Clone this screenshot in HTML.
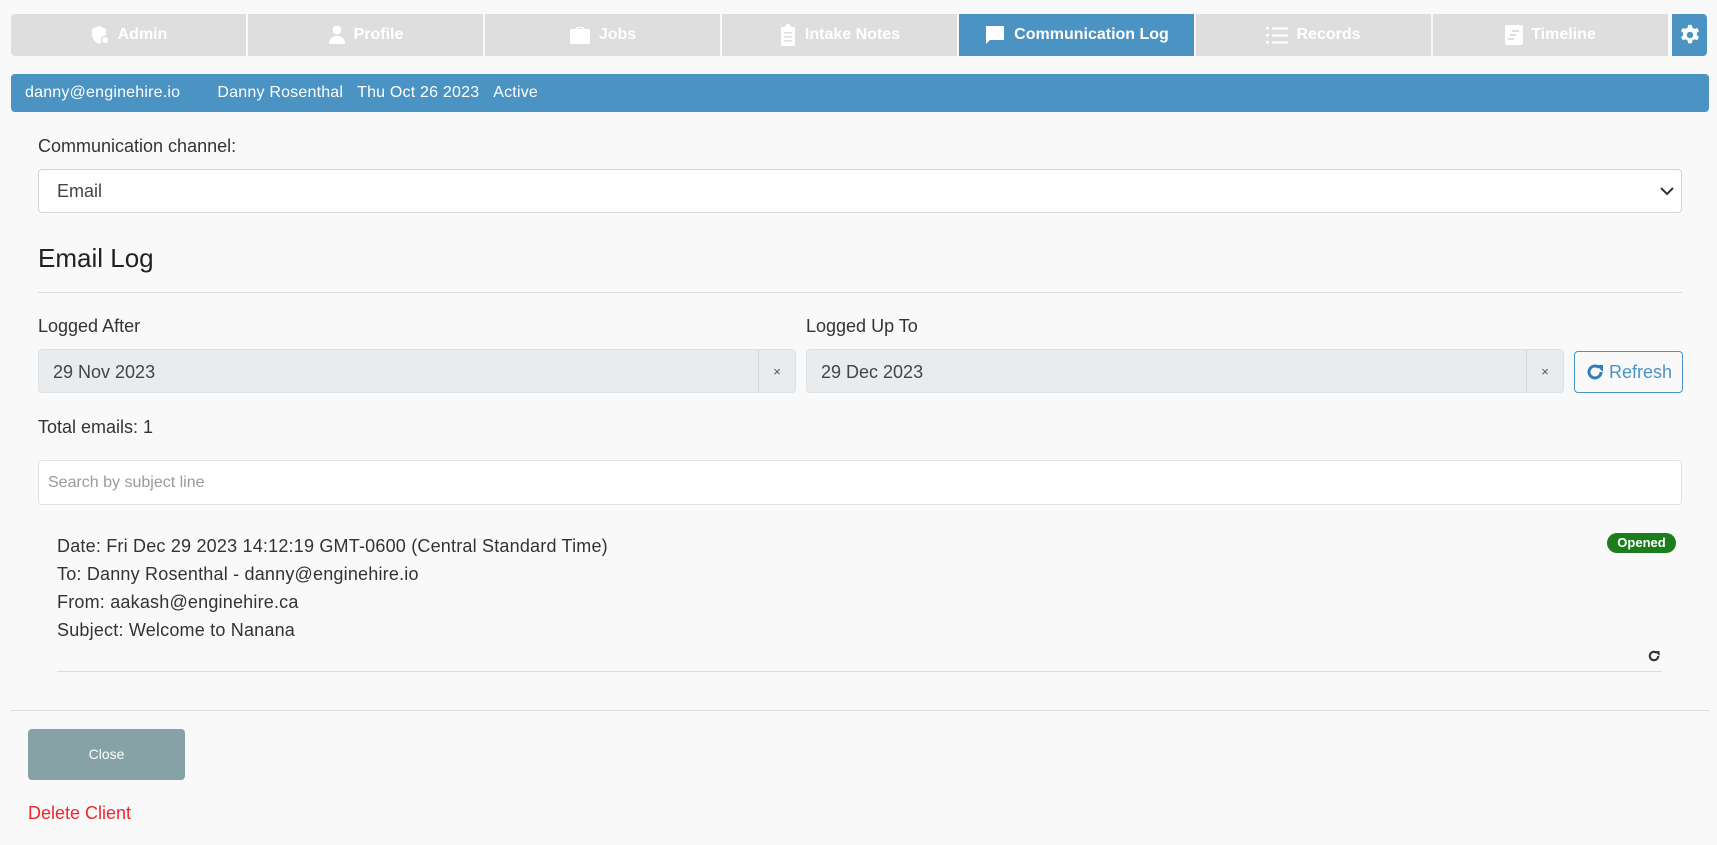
<!DOCTYPE html>
<html><head><meta charset="utf-8"><style>
*{box-sizing:border-box;margin:0;padding:0}
body{width:1717px;height:845px;background:#f9f9f9;font-family:"Liberation Sans",sans-serif;color:#333;position:relative;overflow:hidden}
.a{position:absolute}
.tab{position:absolute;top:14px;height:42px;width:235px;background:#dedede;color:#fff;font-size:16px;font-weight:bold;display:flex;align-items:center;justify-content:center;gap:8px}
.tab svg{fill:#fff}
.act{background:#4a93c3}
.inp{position:absolute;background:#e9ecef;border:1px solid #dee2e6;border-radius:4px;height:44px;font-size:18px;color:#444;padding:12px 14px}
.x{position:absolute;top:0;right:0;width:37px;height:42px;border-left:1px solid #d3d7db;font-size:13px;color:#555;display:flex;align-items:center;justify-content:center}
.line{position:absolute;left:57px;font-size:18px;color:#333;letter-spacing:0.2px}
</style></head><body>
<div class="tab" style="left:11px;border-radius:4px 0 0 4px"><svg width="20" height="20" viewBox="0 0 20 20"><path d="M9 1l7 3v5c0 5-3 8-7 10C5 17 2 14 2 9V4z"/><circle cx="15" cy="15" r="4.5" fill="#dedede"/><circle cx="15" cy="15" r="3"/></svg>Admin</div>
<div class="tab" style="left:248px"><svg width="18" height="20" viewBox="0 0 18 20"><circle cx="9" cy="5" r="4.5"/><path d="M1 19c0-5 3-8 8-8s8 3 8 8z"/></svg>Profile</div>
<div class="tab" style="left:485px"><svg width="22" height="20" viewBox="0 0 22 20"><path d="M7 4V2h8v2h-2V3H9v1z"/><rect x="1" y="4" width="20" height="15" rx="2"/></svg>Jobs</div>
<div class="tab" style="left:722px"><svg width="18" height="22" viewBox="0 0 18 22"><path d="M2 3h4a3 3 0 0 1 6 0h4v19H2z"/><rect x="5" y="8" width="8" height="1.6" fill="#dedede"/><rect x="5" y="12" width="8" height="1.6" fill="#dedede"/><rect x="5" y="16" width="8" height="1.6" fill="#dedede"/></svg>Intake Notes</div>
<div class="tab act" style="left:959px"><svg width="22" height="22" viewBox="0 0 22 22"><path d="M2 2h18v14H6l-4 4z"/></svg>Communication Log</div>
<div class="tab" style="left:1196px"><svg width="22" height="18" viewBox="0 0 22 18"><rect x="0" y="1" width="3" height="2.5"/><rect x="0" y="8" width="3" height="2.5"/><rect x="0" y="15" width="3" height="2.5"/><rect x="6" y="1.5" width="16" height="2"/><rect x="6" y="8.5" width="16" height="2"/><rect x="6" y="15.5" width="16" height="2"/></svg>Records</div>
<div class="tab" style="left:1433px"><svg width="18" height="20" viewBox="0 0 18 20"><rect x="0" y="0" width="18" height="20" rx="2"/><rect x="7" y="5" width="7" height="2" fill="#dedede"/><rect x="5" y="9" width="6" height="2" fill="#dedede"/><rect x="3" y="13" width="6" height="2" fill="#dedede"/></svg>Timeline</div>
<div class="tab act" style="left:1672px;width:35px;border-radius:0 4px 4px 0"><svg width="22" height="22" viewBox="0 0 24 24"><path d="M10 1h4l.6 3 2.3 1.3 2.9-1 2 3.4-2.3 2v2.6l2.3 2-2 3.4-2.9-1-2.3 1.3-.6 3h-4l-.6-3-2.3-1.3-2.9 1-2-3.4 2.3-2v-2.6l-2.3-2 2-3.4 2.9 1L9.4 4zM12 8.5a3.5 3.5 0 1 0 0 7 3.5 3.5 0 0 0 0-7z" fill-rule="evenodd"/></svg></div>

<div class="a" style="left:11px;top:74px;width:1698px;height:38px;background:#4a93c3;border-radius:4px;color:#fff;font-size:16px;line-height:38px;padding-left:14px;letter-spacing:0.2px">danny@enginehire.io&nbsp;&nbsp;&nbsp;&nbsp;&nbsp;&nbsp;&nbsp;&nbsp;Danny Rosenthal&nbsp;&nbsp;&nbsp;Thu Oct 26 2023&nbsp;&nbsp;&nbsp;Active</div>

<div class="a" style="left:38px;top:136px;font-size:18px">Communication channel:</div>
<div class="a" style="left:38px;top:169px;width:1644px;height:44px;background:#fff;border:1px solid #d6d6d6;border-radius:4px;font-size:18px;padding:11px 18px;color:#444">Email
<svg class="a" style="right:6px;top:14px" width="16" height="14" viewBox="0 0 16 14"><path d="M2 4l6 6 6-6" stroke="#333" stroke-width="2" fill="none"/></svg></div>

<div class="a" style="left:38px;top:243px;font-size:26px;color:#222">Email Log</div>
<div class="a" style="left:38px;top:292px;width:1644px;height:1px;background:#dcdcdc"></div>

<div class="a" style="left:38px;top:316px;font-size:18px">Logged After</div>
<div class="a" style="left:806px;top:316px;font-size:18px">Logged Up To</div>
<div class="inp" style="left:38px;top:349px;width:758px">29 Nov 2023<div class="x">×</div></div>
<div class="inp" style="left:806px;top:349px;width:758px">29 Dec 2023<div class="x">×</div></div>
<div class="a" style="left:1574px;top:351px;width:109px;height:42px;border:1px solid #4a93c3;border-radius:4px;color:#4a93c3;font-size:18px;display:flex;align-items:center;justify-content:center;gap:4px"><svg width="20" height="20" viewBox="0 0 20 20"><path d="M16 10a6 6 0 1 1-2-4.5" stroke="#2f80b8" stroke-width="3" fill="none"/><path d="M11 3h7v7z" fill="#2f80b8"/></svg>Refresh</div>

<div class="a" style="left:38px;top:417px;font-size:18px">Total emails: 1</div>
<div class="a" style="left:38px;top:460px;width:1644px;height:45px;background:#fff;border:1px solid #e2e2e2;border-radius:4px;font-size:16px;color:#9a9a9a;padding:13px 9px">Search by subject line</div>

<div class="line" style="top:536px">Date: Fri Dec 29 2023 14:12:19 GMT-0600 (Central Standard Time)</div>
<div class="line" style="top:564px">To: Danny Rosenthal - danny@enginehire.io</div>
<div class="line" style="top:592px">From: aakash@enginehire.ca</div>
<div class="line" style="top:620px">Subject: Welcome to Nanana</div>
<div class="a" style="left:1607px;top:533px;width:69px;height:20px;background:#1c7d1c;border-radius:10px;color:#fff;font-size:13px;font-weight:bold;text-align:center;line-height:20px">Opened</div>
<svg class="a" style="left:1647px;top:649px" width="14" height="14" viewBox="0 0 20 20"><path d="M16 10a6 6 0 1 1-2-4.5" stroke="#333" stroke-width="3" fill="none"/><path d="M11 3h7v7z" fill="#333"/></svg>
<div class="a" style="left:57px;top:671px;width:1605px;height:1px;background:#dcdcdc"></div>
<div class="a" style="left:11px;top:710px;width:1698px;height:1px;background:#dcdcdc"></div>

<div class="a" style="left:28px;top:729px;width:157px;height:51px;background:#87a2a6;border-radius:4px;color:#fff;font-size:14px;text-align:center;line-height:51px">Close</div>
<div class="a" style="left:28px;top:803px;font-size:18px;color:#f0262e">Delete Client</div>
</body></html>
